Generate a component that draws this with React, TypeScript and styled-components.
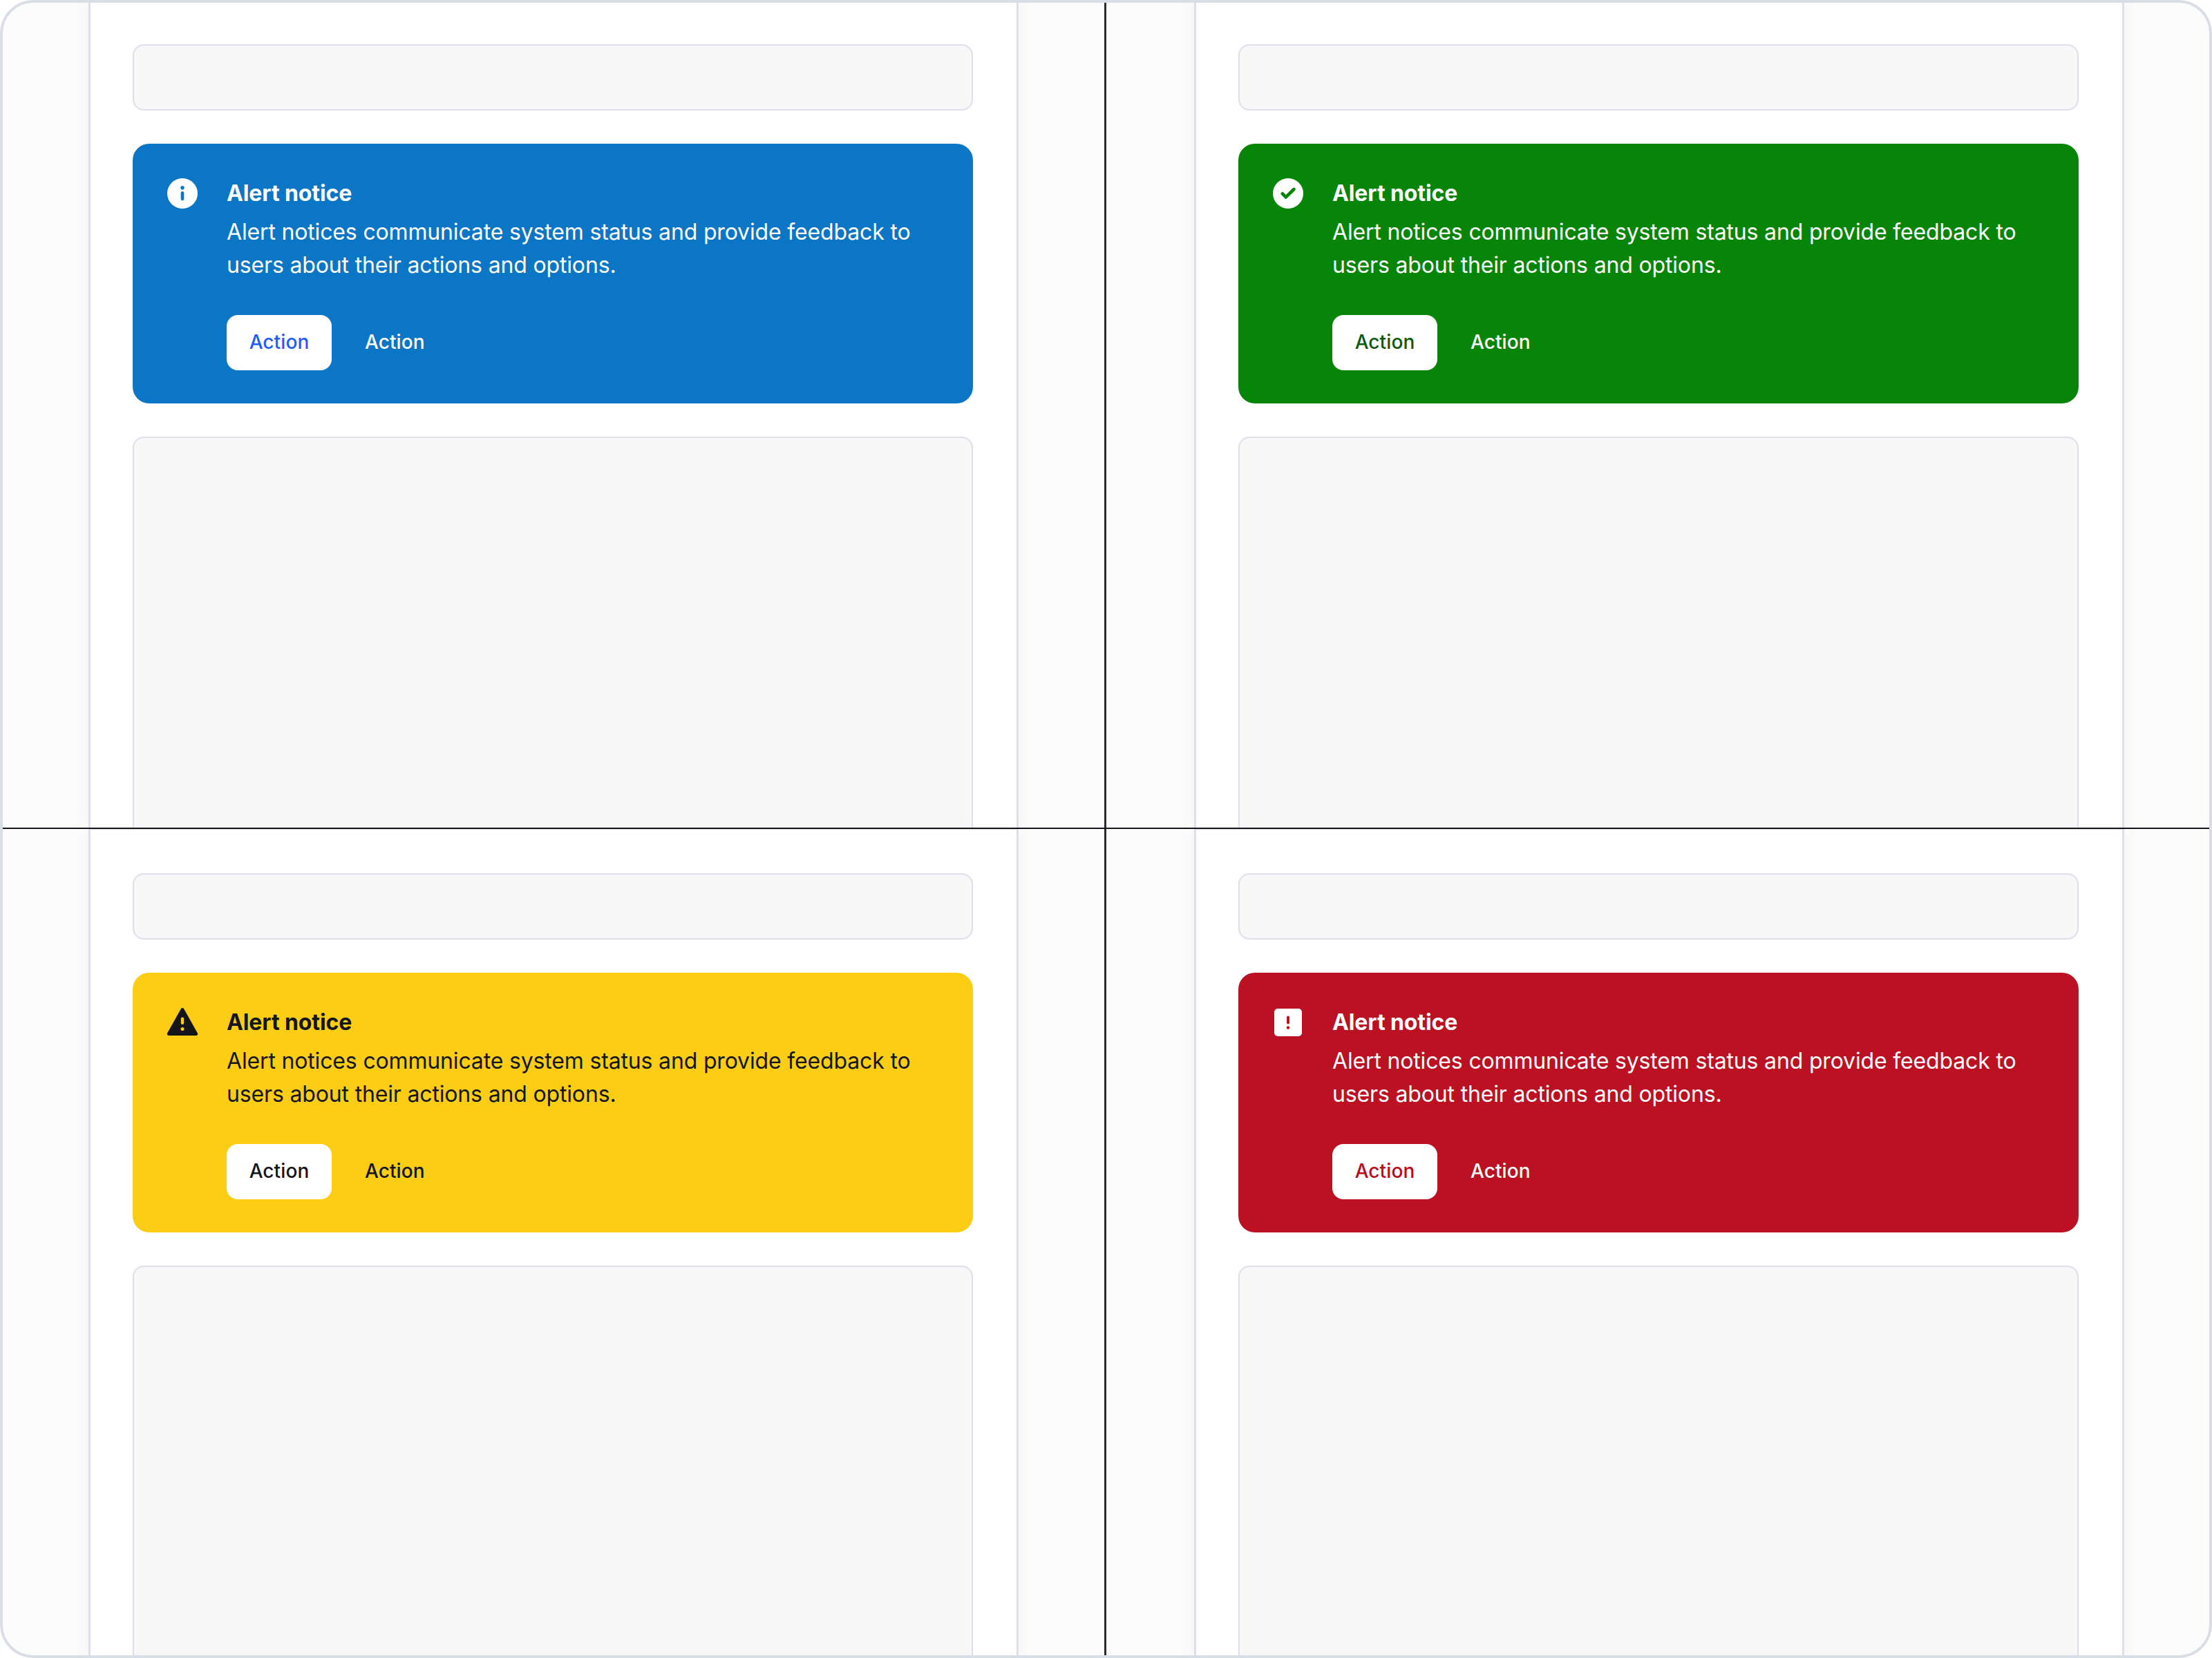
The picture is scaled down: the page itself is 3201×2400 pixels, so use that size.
import styled, { createGlobalStyle } from "styled-components";

type Tone = "info" | "success" | "warning" | "danger";

const tones: Record<Tone, { bg: string; fg: string; action: string }> = {
  info: { bg: "#0b76c5", fg: "#ffffff", action: "#1f5bff" },
  success: { bg: "#078508", fg: "#ffffff", action: "#0b5a0e" },
  warning: { bg: "#fbcd14", fg: "#14151a", action: "#14151a" },
  danger: { bg: "#bb1122", fg: "#ffffff", action: "#bb0a1e" },
};

const GlobalStyle = createGlobalStyle`
  html, body {
    margin: 0;
    background: #ffffff;
  }
`;

function ToneIcon({ tone }: { tone: Tone }) {
  const { bg, fg } = tones[tone];
  if (tone === "info") {
    return (
      <IconSvg viewBox="0 0 24 24">
        <circle cx="12" cy="12" r="11" fill={fg} />
        <circle cx="12" cy="7.85" r="1.35" fill={bg} />
        <path d="M12 11.6V16" stroke={bg} strokeWidth="2.3" strokeLinecap="round" />
      </IconSvg>
    );
  }
  if (tone === "success") {
    return (
      <IconSvg viewBox="0 0 24 24">
        <circle cx="12" cy="12" r="11" fill={fg} />
        <path
          d="M7.9 12.2L10.4 14.7L16.2 9"
          fill="none"
          stroke={bg}
          strokeWidth="2.4"
          strokeLinecap="round"
          strokeLinejoin="round"
        />
      </IconSvg>
    );
  }
  if (tone === "warning") {
    return (
      <IconSvg viewBox="0 0 24 24">
        <path
          d="M12 2.7L21.9 20.3H2.1Z"
          fill={fg}
          stroke={fg}
          strokeWidth="2.4"
          strokeLinejoin="round"
        />
        <path d="M12 9.3V12.4" stroke={bg} strokeWidth="2.2" strokeLinecap="round" />
        <circle cx="12" cy="16.8" r="1.25" fill={bg} />
      </IconSvg>
    );
  }
  return (
    <IconSvg viewBox="0 0 24 24">
      <rect x="2" y="2" width="20" height="20" rx="2.5" fill={fg} />
      <path d="M12 8.3V12.3" stroke={bg} strokeWidth="2" strokeLinecap="round" />
      <circle cx="12" cy="15.8" r="1.15" fill={bg} />
    </IconSvg>
  );
}

function Notice({ tone }: { tone: Tone }) {
  return (
    <Alert $tone={tone}>
      <ToneIcon tone={tone} />
      <AlertBody>
        <AlertTitle>Alert notice</AlertTitle>
        <AlertText>
          Alert notices communicate system status and provide feedback to users
          about their actions and options.
        </AlertText>
        <Actions>
          <PrimaryAction $tone={tone}>Action</PrimaryAction>
          <GhostAction $tone={tone}>Action</GhostAction>
        </Actions>
      </AlertBody>
    </Alert>
  );
}

function Quadrant({ tone, lead, lower }: { tone: Tone; lead: number; lower?: boolean }) {
  return (
    <Cell $lead={lead}>
      <Pane $lower={lower}>
        <Placeholder $height={96} />
        <Notice tone={tone} />
        <Placeholder $height={700} />
      </Pane>
    </Cell>
  );
}

export default function App() {
  return (
    <>
      <GlobalStyle />
      <Frame>
        <Quadrant tone="info" lead={128} />
        <VLine />
        <Quadrant tone="success" lead={127} />
        <HLine />
        <Quadrant tone="warning" lead={128} lower />
        <VLine />
        <Quadrant tone="danger" lead={127} lower />
      </Frame>
    </>
  );
}

const Frame = styled.div`
  position: relative;
  width: 3201px;
  height: 2400px;
  display: grid;
  grid-template-columns: 1598px 3px 1600px;
  grid-template-rows: 1198px 2px 1200px;
  overflow: hidden;
  border-radius: 48px;
  font-family: Inter, "Liberation Sans", sans-serif;

  &::after {
    content: "";
    position: absolute;
    inset: 0;
    border: 4px solid #d9dde5;
    border-radius: 48px;
    pointer-events: none;
  }
`;

const VLine = styled.div`
  background: #2a2b30;
`;

const HLine = styled.div`
  grid-column: 1 / -1;
  background: #14151a;
`;

const Cell = styled.div<{ $lead: number }>`
  display: flex;
  padding-left: ${(p) => p.$lead}px;
  background: #fcfcfc;
  overflow: hidden;
`;

const Pane = styled.div<{ $lower?: boolean }>`
  box-sizing: border-box;
  flex: none;
  width: 1346px;
  display: flex;
  flex-direction: column;
  gap: 48px;
  padding: ${(p) => (p.$lower ? "63px" : "64px")} 63px 0 61px;
  background: #ffffff;
  border-left: 3px solid #dcdfe7;
  border-right: 3px solid #dcdfe7;
  border-top: ${(p) => (p.$lower ? "1px solid #dcdfe7" : "none")};
  box-shadow: 0 0 24px rgba(20, 21, 26, 0.05);
`;

const Placeholder = styled.div<{ $height: number }>`
  box-sizing: border-box;
  flex: none;
  height: ${(p) => p.$height}px;
  background: #f7f7f7;
  border: 2px solid #dcdfe7;
  border-radius: 16px;
`;

const Alert = styled.div<{ $tone: Tone }>`
  flex: none;
  display: flex;
  gap: 40px;
  padding: 48px;
  border-radius: 24px;
  background: ${(p) => tones[p.$tone].bg};
  color: ${(p) => tones[p.$tone].fg};
`;

const IconSvg = styled.svg`
  flex: none;
  width: 48px;
  height: 48px;
`;

const AlertBody = styled.div`
  display: flex;
  flex-direction: column;
  min-width: 0;
`;

const AlertTitle = styled.div`
  font-size: 32px;
  line-height: 48px;
  font-weight: 700;
  letter-spacing: -0.1px;
  margin-bottom: 8px;
`;

const AlertText = styled.div`
  font-size: 32px;
  line-height: 48px;
  font-weight: 400;
  letter-spacing: -0.16px;
`;

const Actions = styled.div`
  display: flex;
  align-items: center;
  gap: 48px;
  margin-top: 48px;
`;

const PrimaryAction = styled.div<{ $tone: Tone }>`
  box-sizing: border-box;
  width: 152px;
  height: 80px;
  padding-bottom: 2px;
  display: flex;
  align-items: center;
  justify-content: center;
  border-radius: 16px;
  background: #ffffff;
  color: ${(p) => tones[p.$tone].action};
  font-size: 28px;
  font-weight: 500;
  letter-spacing: 0.1px;
`;

const GhostAction = styled.div<{ $tone: Tone }>`
  padding-bottom: 2px;
  color: ${(p) => tones[p.$tone].fg};
  font-size: 28px;
  font-weight: 500;
  letter-spacing: 0.1px;
`;
